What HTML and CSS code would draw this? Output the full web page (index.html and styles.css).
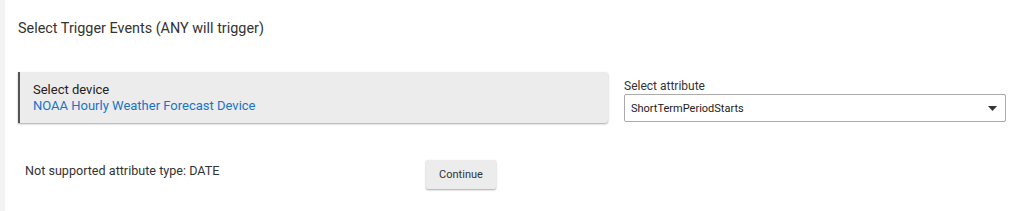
FILE: index.html
```html
<!DOCTYPE html>
<html>
<head>
<meta charset="utf-8">
<link rel="stylesheet" href="styles.css">
</head>
<body>
<div class="page">
  <div class="rail"></div>
  <main class="content">
    <h2 class="title">Select Trigger Events (ANY will trigger)</h2>
    <div class="row">
      <div class="device-btn">
        <div class="device-label">Select device</div>
        <div class="device-value">NOAA Hourly Weather Forecast Device</div>
      </div>
      <div class="attr">
        <div class="attr-label">Select attribute</div>
        <div class="select">
          <span class="select-text">ShortTermPeriodStarts</span>
          <svg class="caret" width="9" height="5" viewBox="0 0 9 5"><path d="M0 0h9L4.5 5z" fill="#333"/></svg>
        </div>
      </div>
    </div>
    <div class="bottom">
      <div class="note">Not supported attribute type: DATE</div>
      <div><button class="btn">Continue</button></div>
    </div>
  </main>
</div>
</body>
</html>
```
FILE: styles.css
```css
html, body {
  margin: 0;
  padding: 0;
  background: #fff;
}
body {
  font-family: Roboto, "Liberation Sans", sans-serif;
  color: #333;
}
.page {
  display: flex;
  height: 211px;
}
.rail {
  width: 5px;
  background: #f3f3f3;
  flex: none;
}
.content {
  flex: 1;
  padding: 0 18px 0 13px;
}
.title {
  margin: 0;
  padding-top: 20px;
  font-size: 14.4px;
  font-weight: 400;
  line-height: 18px;
  color: #333;
}
.row {
  display: flex;
  gap: 16px;
  margin-top: 34px;
  align-items: flex-start;
}
.device-btn {
  width: 590px;
  height: 51px;
  box-sizing: border-box;
  background: #ececec;
  border-left: 2px solid #555;
  border-radius: 0 3px 3px 0;
  box-shadow: 0 1px 2px rgba(0,0,0,0.35);
  padding: 10px 13px 0;
  font-size: 13px;
  line-height: 16px;
}
.device-label {
  color: #222;
}
.device-value {
  color: #1a73c8;
}
.attr {
  flex: 1;
  padding-top: 6px;
}
.attr-label {
  font-size: 12px;
  line-height: 16px;
  color: #333;
}
.select {
  height: 28px;
  box-sizing: border-box;
  border: 1px solid #aaa;
  border-radius: 2px;
  display: flex;
  align-items: center;
  justify-content: space-between;
  padding: 0 8px 0 6px;
  font-size: 11px;
  color: #222;
}
.bottom {
  display: grid;
  grid-template-columns: 408px auto;
  margin-top: 37px;
}
.note {
  padding-left: 7px;
  padding-top: 3px;
  font-size: 12.6px;
  color: #333;
}
.btn {
  font-family: Roboto, "Liberation Sans", sans-serif;
  font-size: 11px;
  color: #333;
  width: 70px;
  height: 29px;
  border: none;
  border-radius: 2px;
  background: #ececec;
  box-shadow: 0 1px 2px rgba(0,0,0,0.35);
  padding: 0;
}
```
